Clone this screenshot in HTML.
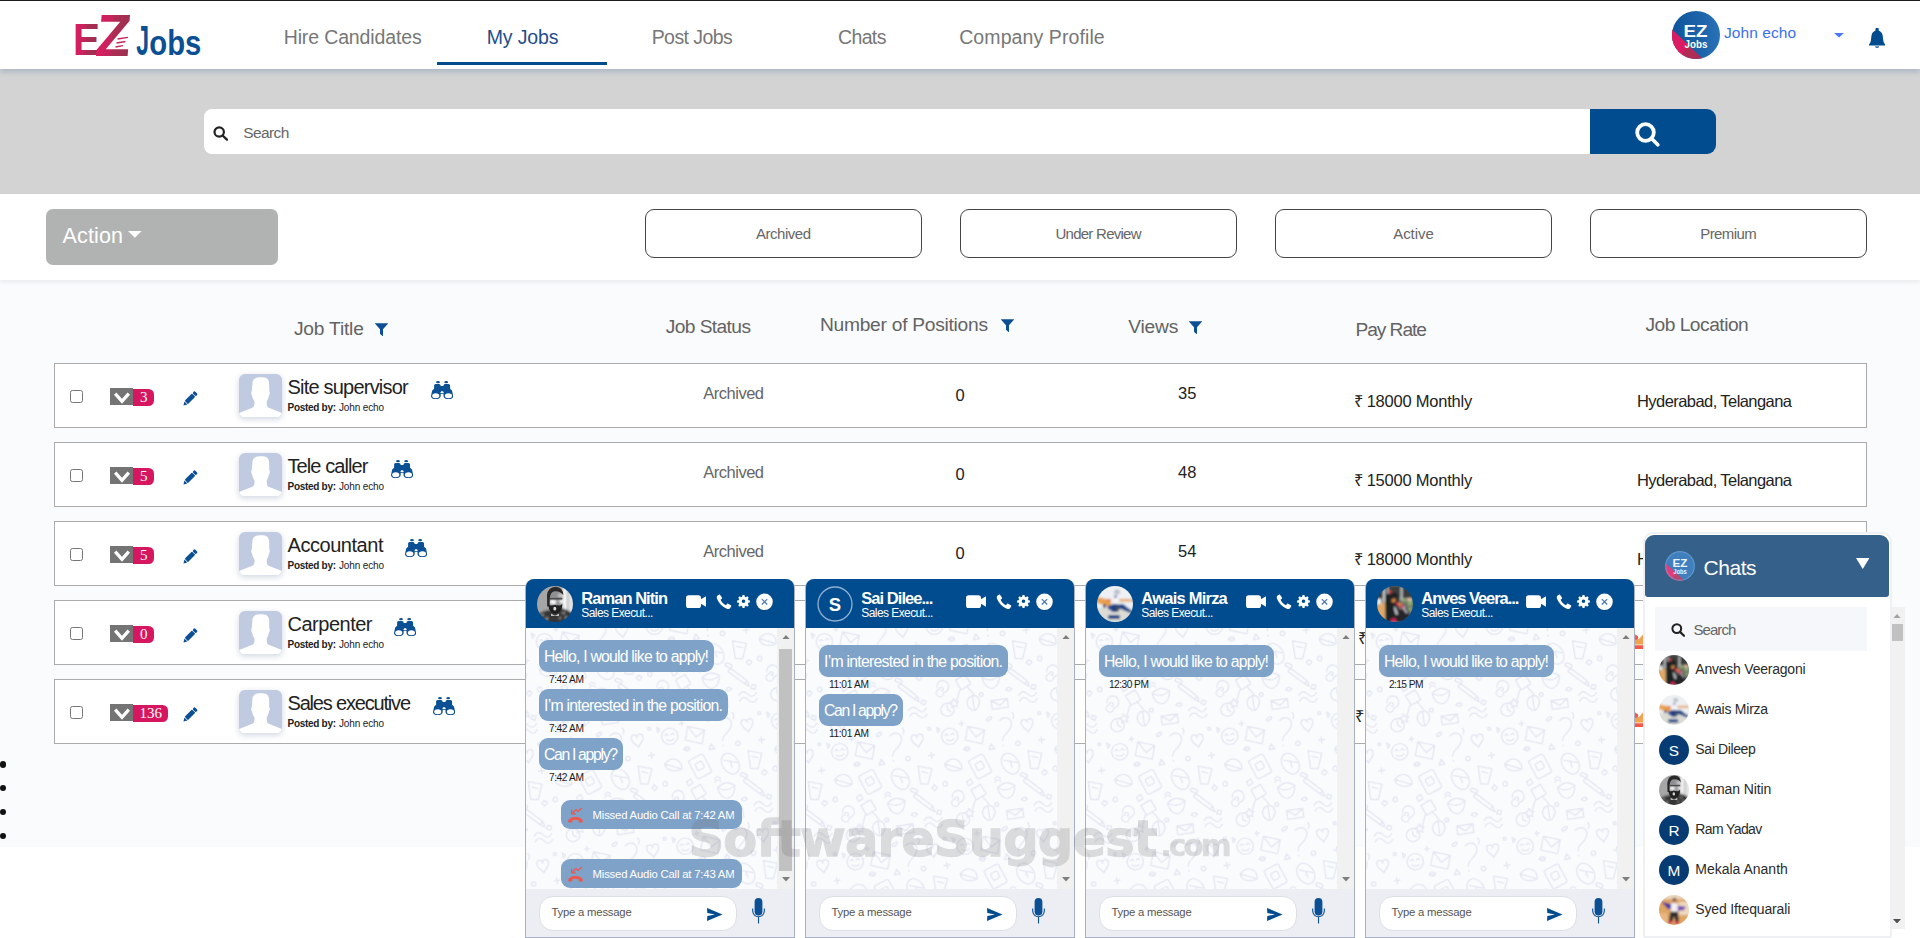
<!DOCTYPE html>
<html lang="en">
<head>
<meta charset="utf-8">
<title>EZ Jobs - My Jobs</title>
<style>
*{box-sizing:border-box;margin:0;padding:0}
html,body{width:1920px;height:938px;overflow:hidden;background:#fff;font-family:"Liberation Sans",sans-serif;color:#333}
.abs{position:absolute}
.t{position:absolute;white-space:pre}
#page{position:relative;width:1920px;height:938px;overflow:hidden;background:#fff}
</style>
</head>
<body>
<div id="page">
<div class="abs" style="left:0px;top:280px;width:1920px;height:566.5px;background:#fafbfd"></div><div class="abs" style="left:0px;top:69px;width:1920px;height:125px;background:#d3d3d3"></div><div class="abs" style="left:0px;top:194px;width:1920px;height:86px;background:#fff;box-shadow:0 2px 4px rgba(40,45,60,.085)"></div><div class="abs" style="left:0px;top:0px;width:1920px;height:68.5px;background:#fff;box-shadow:0 3px 5px rgba(110,140,175,.38)"></div><div class="abs" style="left:0px;top:0px;width:1920px;height:1px;background:#1a1a1a"></div><svg class="abs" style="left:70px;top:10px;" width="140" height="52" viewBox="0 0 140 52"><defs><linearGradient id="lg1" x1="0" x2="1" y1="0" y2="0"><stop offset="0" stop-color="#dc1c62"/><stop offset=".45" stop-color="#c4245c"/><stop offset=".46" stop-color="#b02c55"/><stop offset="1" stop-color="#98304e"/></linearGradient></defs>
<text x="3" y="45.300" font-family="Liberation Sans, sans-serif" font-weight="700" font-size="43.500" fill="url(#lg1)" textLength="27" lengthAdjust="spacingAndGlyphs">E</text>
<text transform="translate(24.300,45.700) skewX(-5)" font-family="Liberation Sans, sans-serif" font-weight="700" font-size="59.500" fill="url(#lg1)" textLength="35" lengthAdjust="spacingAndGlyphs">Z</text>
<path d="M47.500 29l10.500-1.700M46.500 33l9-1.500M45.500 37l7.500-1.300" stroke="#c4245c" stroke-width="1.3"/>
<text y="45" font-family="Liberation Sans, sans-serif" font-weight="700" fill="#0b4f94"><tspan x="66.300" font-size="42" textLength="12.800" lengthAdjust="spacingAndGlyphs">J</tspan><tspan x="79.300" font-size="35.500" textLength="52" lengthAdjust="spacingAndGlyphs">obs</tspan></text></svg><span class="t" style="left:283.70px;top:27.69px;font-size:19.5px;line-height:19.5px;color:#777;letter-spacing:-0.131px;">Hire Candidates</span><span class="t" style="left:486.70px;top:27.69px;font-size:19.5px;line-height:19.5px;color:#1f4e8c;letter-spacing:-0.152px;">My Jobs</span><span class="t" style="left:651.70px;top:27.69px;font-size:19.5px;line-height:19.5px;color:#777;letter-spacing:-0.580px;">Post Jobs</span><span class="t" style="left:838.00px;top:27.69px;font-size:19.5px;line-height:19.5px;color:#777;letter-spacing:-0.638px;">Chats</span><span class="t" style="left:959.20px;top:27.69px;font-size:19.5px;line-height:19.5px;color:#777;letter-spacing:0.096px;">Company Profile</span><div class="abs" style="left:437px;top:62px;width:170px;height:3px;background:#004c8f"></div><svg class="abs" style="left:1672px;top:11px;" width="48" height="48" viewBox="0 0 48 48"><defs><clipPath id="c1"><circle cx="24" cy="24" r="24"/></clipPath><linearGradient id="ag" x1="0" x2="1"><stop offset="0" stop-color="#0f559c"/><stop offset=".6" stop-color="#1c63aa"/><stop offset="1" stop-color="#2a72b8"/></linearGradient></defs>
<g clip-path="url(#c1)"><rect width="48" height="48" fill="url(#ag)"/><path d="M-2 16.500L33 50L-2 50z" fill="#b02c55"/><path d="M-2 16.500L15.500 33.300L8 50L-2 50z" fill="#dc1c62"/></g>
<text x="11.5" y="25.5" font-family="Liberation Sans, sans-serif" font-weight="700" font-size="17" fill="#fff" textLength="24" lengthAdjust="spacingAndGlyphs">EZ</text>
<text x="12.5" y="37" font-family="Liberation Sans, sans-serif" font-weight="700" font-size="11" fill="#fff" textLength="23" lengthAdjust="spacingAndGlyphs">Jobs</text></svg><span class="t" style="left:1724.00px;top:25.08px;font-size:15.5px;line-height:15.5px;color:#3b6ff0;letter-spacing:0.059px;">John echo</span><svg class="abs" style="left:1834px;top:33px;" width="10" height="5" viewBox="0 0 10 5"><path d="M0 0h10l-5 4.6z" fill="#4a7af5"/></svg><svg class="abs" style="left:1868.8px;top:27.8px;" width="16.2" height="20.2" viewBox="0 0 16.200 20.200"><path d="M6.500 .400Q6.500 0 7 0H9.200Q9.700 0 9.700 .400V2.600C11.500 3.200 13.200 4.800 13.700 7.500L14.400 13C14.600 14.500 15.500 15.500 16.200 16.400V17.400H0V16.400C.700 15.500 1.600 14.500 1.800 13L2.500 7.500C3 4.800 4.700 3.200 6.500 2.600Z" fill="#004c8f"/><path d="M6.100 18.300H10.100C10.100 19.500 9.200 20.200 8.100 20.200C7 20.200 6.100 19.500 6.100 18.300Z" fill="#004c8f" opacity=".75"/></svg><div class="abs" style="left:204px;top:109px;width:1386px;height:45px;background:#fff;border-radius:8px 0 0 8px"></div><div class="abs" style="left:1590px;top:109px;width:126px;height:45px;background:#004c8f;border-radius:0 9px 9px 0"></div><svg class="abs" style="left:212.5px;top:125.5px;" width="15.5" height="15" viewBox="0 0 15.5 15"><circle cx="6.2" cy="6" r="4.700" fill="none" stroke="#222" stroke-width="2.200"/><path d="M9.600 9.500l4.300 4.100" stroke="#222" stroke-width="2.400" stroke-linecap="round"/></svg><span class="t" style="left:243.30px;top:124.88px;font-size:15.5px;line-height:15.5px;color:#666;letter-spacing:-0.625px;">Search</span><svg class="abs" style="left:1634.5px;top:121.5px;" width="25" height="25" viewBox="0 0 25 25"><circle cx="10.500" cy="10.500" r="8.300" fill="none" stroke="#fff" stroke-width="3.800"/><path d="M16.800 16.800l6 6" stroke="#fff" stroke-width="3.600" stroke-linecap="round"/></svg><div class="abs" style="left:46px;top:209px;width:232px;height:56px;background:#b1b3b2;border-radius:7px"></div><span class="t" style="left:62.50px;top:225.60px;font-size:21.5px;line-height:21.5px;color:#fff;letter-spacing:0.147px;">Action</span><svg class="abs" style="left:128.3px;top:230.8px;" width="13.7" height="7" viewBox="0 0 13.7 7"><path d="M0 0h13.700l-6.850 6.800z" fill="#fff"/></svg><div class="abs" style="left:645px;top:209px;width:277px;height:49px;background:#fff;border:1px solid #444;border-radius:9px"></div><span class="t" style="left:756.00px;top:226.30px;font-size:15px;line-height:15px;color:#666;letter-spacing:-0.480px;">Archived</span><div class="abs" style="left:960px;top:209px;width:277px;height:49px;background:#fff;border:1px solid #444;border-radius:9px"></div><span class="t" style="left:1055.50px;top:226.30px;font-size:15px;line-height:15px;color:#666;letter-spacing:-0.747px;">Under Review</span><div class="abs" style="left:1275px;top:209px;width:277px;height:49px;background:#fff;border:1px solid #444;border-radius:9px"></div><span class="t" style="left:1393.25px;top:226.30px;font-size:15px;line-height:15px;color:#666;letter-spacing:-0.072px;">Active</span><div class="abs" style="left:1590px;top:209px;width:277px;height:49px;background:#fff;border:1px solid #444;border-radius:9px"></div><span class="t" style="left:1700.25px;top:226.30px;font-size:15px;line-height:15px;color:#666;letter-spacing:-0.586px;">Premium</span><span class="t" style="left:293.90px;top:319.05px;font-size:19.2px;line-height:19.2px;color:#636363;letter-spacing:-0.184px;">Job Title</span><svg class="abs" style="left:375px;top:323px;" width="13" height="13.7" viewBox="0 0 13 13"><path d="M0.300 0h12.400c.3 0 .4.300.2.500L8 6v6.400c0 .3-.3.400-.5.200L5.200 10.600c-.1-.1-.2-.2-.2-.4V6L.1.500C-.1.300 0 0 .3 0z" fill="#0b4f94"/></svg><span class="t" style="left:665.80px;top:316.75px;font-size:19.2px;line-height:19.2px;color:#636363;letter-spacing:-0.608px;">Job Status</span><span class="t" style="left:820.00px;top:315.25px;font-size:19.2px;line-height:19.2px;color:#636363;letter-spacing:-0.265px;">Number of Positions</span><svg class="abs" style="left:1000.5px;top:318.8px;" width="13" height="13.7" viewBox="0 0 13 13"><path d="M0.300 0h12.400c.3 0 .4.300.2.500L8 6v6.400c0 .3-.3.400-.5.200L5.200 10.600c-.1-.1-.2-.2-.2-.4V6L.1.500C-.1.300 0 0 .3 0z" fill="#0b4f94"/></svg><span class="t" style="left:1128.30px;top:316.75px;font-size:19.2px;line-height:19.2px;color:#636363;letter-spacing:-0.211px;">Views</span><svg class="abs" style="left:1189px;top:320.5px;" width="13" height="13.7" viewBox="0 0 13 13"><path d="M0.300 0h12.400c.3 0 .4.300.2.500L8 6v6.400c0 .3-.3.400-.5.200L5.200 10.600c-.1-.1-.2-.2-.2-.4V6L.1.500C-.1.300 0 0 .3 0z" fill="#0b4f94"/></svg><span class="t" style="left:1355.40px;top:319.95px;font-size:19.2px;line-height:19.2px;color:#636363;letter-spacing:-1.048px;">Pay Rate</span><span class="t" style="left:1645.40px;top:315.25px;font-size:19.2px;line-height:19.2px;color:#636363;letter-spacing:-0.492px;">Job Location</span><div class="abs" style="left:54px;top:363px;width:1813px;height:65px;background:#fff;border:1px solid #ababab"></div><div class="abs" style="left:70px;top:390px;width:13px;height:13px;background:#fff;border:1px solid #767676;border-radius:2.500px"></div><div class="abs" style="left:110px;top:388px;width:23px;height:17px;background:#747474"></div><svg class="abs" style="left:113px;top:391px;" width="18" height="14" viewBox="0 0 18 14"><path d="M2.200 2.600L9 10.300L15.800 2.600" fill="none" stroke="#fff" stroke-width="3.300"/></svg><div class="abs" style="left:133px;top:389px;width:21px;height:17px;background:#d6175f;border-radius:0 5.500px 5.500px 0"></div><span class="t" style="left:140.05px;top:390.44px;font-size:15px;line-height:15px;color:#fff;font-family:'Liberation Serif',serif;">3</span><svg class="abs" style="left:182.5px;top:390.5px;" width="16" height="16" viewBox="0 0 16 16"><g transform="translate(0.500,14.400) rotate(-45.500)" fill="#0b4f94"><path d="M0 0L3.400-2.100V2.100Z"/><rect x="4.100" y="-2.350" width="10.300" height="4.700" rx=".7"/><rect x="15" y="-2.350" width="3" height="4.700" rx="1.300"/></g></svg><svg class="abs" style="left:239px;top:373.8px;filter:drop-shadow(0 2px 3px rgba(120,135,170,.35))" width="43" height="43.5" viewBox="0 0 43 43.5"><rect width="43" height="43.500" rx="6" fill="#c0cbe1"/><path clip-path="url(#pc)" d="M23.600 3.200C28 3.200 30.100 6 30.100 9.500L30.300 17.500C31 18 31 20 30 21.500C29.500 24 28.500 26 27.800 27.600C27.500 30 28 32.500 29 33.600L43.500 39.300V44H-.5V39.300L14 33.600C15 32.500 15.800 30 15.500 27.600C14.500 26 13.500 24 13 21.500C12 20 12 18 12.700 17.500L13.400 9.500C13.400 6 16 3.200 20 3.200Z" fill="#fff"/></svg><span class="t" style="left:287.50px;top:377.27px;font-size:20px;line-height:20px;color:#222;letter-spacing:-0.792px;">Site supervisor</span><span class="t" style="left:287.50px;top:403.44px;font-size:10px;line-height:10px;color:#222;font-weight:700;letter-spacing:-0.292px;">Posted by:</span><span class="t" style="left:339.00px;top:403.44px;font-size:10px;line-height:10px;color:#222;letter-spacing:-0.145px;">John echo</span><svg class="abs" style="left:430.9px;top:380.8px;" width="22.2" height="18.3" viewBox="0 0 22.200 18.300"><g fill="#0b4f94"><ellipse cx="7" cy="1.200" rx="1.900" ry="1.150"/><ellipse cx="15.200" cy="1.200" rx="1.900" ry="1.150"/><path d="M3.100 4.500Q3.100 2.900 4.700 2.900H8Q9.600 2.900 9.600 4.500V5.100H12.500V4.500Q12.500 2.900 14.100 2.900H17.400Q19.100 2.900 19.100 4.500V7.800L21 9.600L22.200 15C22.200 17 20 18.300 17.400 18.300C14.500 18.300 12.600 16.800 12.500 15V12.700H9.700V15C9.600 16.800 7.500 18.300 4.700 18.300C2 18.300 0 17 0 15L1.200 9.600L3.100 7.800Z"/></g><ellipse cx="4.750" cy="14.800" rx="3.600" ry="2.500" fill="#fff"/><ellipse cx="17.450" cy="14.800" rx="3.600" ry="2.500" fill="#fff"/><path d="M9.300 12L10.200 10.200H12L12.900 12Z" fill="#fff"/></svg><span class="t" style="left:703.30px;top:385.33px;font-size:16.5px;line-height:16.5px;color:#666;letter-spacing:-0.500px;">Archived</span><span class="t" style="left:955.60px;top:387.03px;font-size:16.5px;line-height:16.5px;color:#222;">0</span><span class="t" style="left:1178.00px;top:385.33px;font-size:16.5px;line-height:16.5px;color:#222;">35</span><span class="t" style="left:1353.50px;top:392.63px;font-size:16.5px;line-height:16.5px;color:#222;letter-spacing:-0.223px;">₹ 18000 Monthly</span><span class="t" style="left:1637.00px;top:392.63px;font-size:16.5px;line-height:16.5px;color:#222;letter-spacing:-0.566px;">Hyderabad, Telangana</span><div class="abs" style="left:54px;top:442px;width:1813px;height:65px;background:#fff;border:1px solid #ababab"></div><div class="abs" style="left:70px;top:469px;width:13px;height:13px;background:#fff;border:1px solid #767676;border-radius:2.500px"></div><div class="abs" style="left:110px;top:467px;width:23px;height:17px;background:#747474"></div><svg class="abs" style="left:113px;top:470px;" width="18" height="14" viewBox="0 0 18 14"><path d="M2.200 2.600L9 10.300L15.800 2.600" fill="none" stroke="#fff" stroke-width="3.300"/></svg><div class="abs" style="left:133px;top:468px;width:21px;height:17px;background:#d6175f;border-radius:0 5.500px 5.500px 0"></div><span class="t" style="left:140.05px;top:469.44px;font-size:15px;line-height:15px;color:#fff;font-family:'Liberation Serif',serif;">5</span><svg class="abs" style="left:182.5px;top:469.5px;" width="16" height="16" viewBox="0 0 16 16"><g transform="translate(0.500,14.400) rotate(-45.500)" fill="#0b4f94"><path d="M0 0L3.400-2.100V2.100Z"/><rect x="4.100" y="-2.350" width="10.300" height="4.700" rx=".7"/><rect x="15" y="-2.350" width="3" height="4.700" rx="1.300"/></g></svg><svg class="abs" style="left:239px;top:452.8px;filter:drop-shadow(0 2px 3px rgba(120,135,170,.35))" width="43" height="43.5" viewBox="0 0 43 43.5"><rect width="43" height="43.500" rx="6" fill="#c0cbe1"/><path clip-path="url(#pc)" d="M23.600 3.200C28 3.200 30.100 6 30.100 9.500L30.300 17.500C31 18 31 20 30 21.500C29.500 24 28.500 26 27.800 27.600C27.500 30 28 32.500 29 33.600L43.500 39.300V44H-.5V39.300L14 33.600C15 32.500 15.800 30 15.500 27.600C14.500 26 13.500 24 13 21.500C12 20 12 18 12.700 17.500L13.400 9.500C13.400 6 16 3.200 20 3.200Z" fill="#fff"/></svg><span class="t" style="left:287.50px;top:456.27px;font-size:20px;line-height:20px;color:#222;letter-spacing:-0.905px;">Tele caller</span><span class="t" style="left:287.50px;top:482.44px;font-size:10px;line-height:10px;color:#222;font-weight:700;letter-spacing:-0.292px;">Posted by:</span><span class="t" style="left:339.00px;top:482.44px;font-size:10px;line-height:10px;color:#222;letter-spacing:-0.145px;">John echo</span><svg class="abs" style="left:390.9px;top:459.8px;" width="22.2" height="18.3" viewBox="0 0 22.200 18.300"><g fill="#0b4f94"><ellipse cx="7" cy="1.200" rx="1.900" ry="1.150"/><ellipse cx="15.200" cy="1.200" rx="1.900" ry="1.150"/><path d="M3.100 4.500Q3.100 2.900 4.700 2.900H8Q9.600 2.900 9.600 4.500V5.100H12.500V4.500Q12.500 2.900 14.100 2.900H17.400Q19.100 2.900 19.100 4.500V7.800L21 9.600L22.200 15C22.200 17 20 18.300 17.400 18.300C14.500 18.300 12.600 16.800 12.500 15V12.700H9.700V15C9.600 16.800 7.500 18.300 4.700 18.300C2 18.300 0 17 0 15L1.200 9.600L3.100 7.800Z"/></g><ellipse cx="4.750" cy="14.800" rx="3.600" ry="2.500" fill="#fff"/><ellipse cx="17.450" cy="14.800" rx="3.600" ry="2.500" fill="#fff"/><path d="M9.300 12L10.200 10.200H12L12.900 12Z" fill="#fff"/></svg><span class="t" style="left:703.30px;top:464.33px;font-size:16.5px;line-height:16.5px;color:#666;letter-spacing:-0.500px;">Archived</span><span class="t" style="left:955.60px;top:466.03px;font-size:16.5px;line-height:16.5px;color:#222;">0</span><span class="t" style="left:1178.00px;top:464.33px;font-size:16.5px;line-height:16.5px;color:#222;">48</span><span class="t" style="left:1353.50px;top:471.63px;font-size:16.5px;line-height:16.5px;color:#222;letter-spacing:-0.223px;">₹ 15000 Monthly</span><span class="t" style="left:1637.00px;top:471.63px;font-size:16.5px;line-height:16.5px;color:#222;letter-spacing:-0.566px;">Hyderabad, Telangana</span><div class="abs" style="left:54px;top:521px;width:1813px;height:65px;background:#fff;border:1px solid #ababab"></div><div class="abs" style="left:70px;top:548px;width:13px;height:13px;background:#fff;border:1px solid #767676;border-radius:2.500px"></div><div class="abs" style="left:110px;top:546px;width:23px;height:17px;background:#747474"></div><svg class="abs" style="left:113px;top:549px;" width="18" height="14" viewBox="0 0 18 14"><path d="M2.200 2.600L9 10.300L15.800 2.600" fill="none" stroke="#fff" stroke-width="3.300"/></svg><div class="abs" style="left:133px;top:547px;width:21px;height:17px;background:#d6175f;border-radius:0 5.500px 5.500px 0"></div><span class="t" style="left:140.05px;top:548.44px;font-size:15px;line-height:15px;color:#fff;font-family:'Liberation Serif',serif;">5</span><svg class="abs" style="left:182.5px;top:548.5px;" width="16" height="16" viewBox="0 0 16 16"><g transform="translate(0.500,14.400) rotate(-45.500)" fill="#0b4f94"><path d="M0 0L3.400-2.100V2.100Z"/><rect x="4.100" y="-2.350" width="10.300" height="4.700" rx=".7"/><rect x="15" y="-2.350" width="3" height="4.700" rx="1.300"/></g></svg><svg class="abs" style="left:239px;top:531.8px;filter:drop-shadow(0 2px 3px rgba(120,135,170,.35))" width="43" height="43.5" viewBox="0 0 43 43.5"><rect width="43" height="43.500" rx="6" fill="#c0cbe1"/><path clip-path="url(#pc)" d="M23.600 3.200C28 3.200 30.100 6 30.100 9.500L30.300 17.500C31 18 31 20 30 21.500C29.500 24 28.500 26 27.800 27.600C27.500 30 28 32.500 29 33.600L43.500 39.300V44H-.5V39.300L14 33.600C15 32.500 15.800 30 15.500 27.600C14.500 26 13.500 24 13 21.500C12 20 12 18 12.700 17.500L13.400 9.500C13.400 6 16 3.200 20 3.200Z" fill="#fff"/></svg><span class="t" style="left:287.50px;top:535.27px;font-size:20px;line-height:20px;color:#222;letter-spacing:-0.453px;">Accountant</span><span class="t" style="left:287.50px;top:561.43px;font-size:10px;line-height:10px;color:#222;font-weight:700;letter-spacing:-0.292px;">Posted by:</span><span class="t" style="left:339.00px;top:561.43px;font-size:10px;line-height:10px;color:#222;letter-spacing:-0.145px;">John echo</span><svg class="abs" style="left:404.9px;top:538.8px;" width="22.2" height="18.3" viewBox="0 0 22.200 18.300"><g fill="#0b4f94"><ellipse cx="7" cy="1.200" rx="1.900" ry="1.150"/><ellipse cx="15.200" cy="1.200" rx="1.900" ry="1.150"/><path d="M3.100 4.500Q3.100 2.900 4.700 2.900H8Q9.600 2.900 9.600 4.500V5.100H12.500V4.500Q12.500 2.900 14.100 2.900H17.400Q19.100 2.900 19.100 4.500V7.800L21 9.600L22.200 15C22.200 17 20 18.300 17.400 18.300C14.500 18.300 12.600 16.800 12.500 15V12.700H9.700V15C9.600 16.800 7.500 18.300 4.700 18.300C2 18.300 0 17 0 15L1.200 9.600L3.100 7.800Z"/></g><ellipse cx="4.750" cy="14.800" rx="3.600" ry="2.500" fill="#fff"/><ellipse cx="17.450" cy="14.800" rx="3.600" ry="2.500" fill="#fff"/><path d="M9.300 12L10.200 10.200H12L12.900 12Z" fill="#fff"/></svg><span class="t" style="left:703.30px;top:543.33px;font-size:16.5px;line-height:16.5px;color:#666;letter-spacing:-0.500px;">Archived</span><span class="t" style="left:955.60px;top:545.03px;font-size:16.5px;line-height:16.5px;color:#222;">0</span><span class="t" style="left:1178.00px;top:543.33px;font-size:16.5px;line-height:16.5px;color:#222;">54</span><span class="t" style="left:1353.50px;top:550.63px;font-size:16.5px;line-height:16.5px;color:#222;letter-spacing:-0.223px;">₹ 18000 Monthly</span><span class="t" style="left:1637.00px;top:550.63px;font-size:16.5px;line-height:16.5px;color:#222;letter-spacing:-0.566px;">Hyderabad, Telangana</span><div class="abs" style="left:54px;top:600px;width:1813px;height:65px;background:#fff;border:1px solid #ababab"></div><div class="abs" style="left:70px;top:627px;width:13px;height:13px;background:#fff;border:1px solid #767676;border-radius:2.500px"></div><div class="abs" style="left:110px;top:625px;width:23px;height:17px;background:#747474"></div><svg class="abs" style="left:113px;top:628px;" width="18" height="14" viewBox="0 0 18 14"><path d="M2.200 2.600L9 10.300L15.800 2.600" fill="none" stroke="#fff" stroke-width="3.300"/></svg><div class="abs" style="left:133px;top:626px;width:21px;height:17px;background:#d6175f;border-radius:0 5.500px 5.500px 0"></div><span class="t" style="left:140.05px;top:627.44px;font-size:15px;line-height:15px;color:#fff;font-family:'Liberation Serif',serif;">0</span><svg class="abs" style="left:182.5px;top:627.5px;" width="16" height="16" viewBox="0 0 16 16"><g transform="translate(0.500,14.400) rotate(-45.500)" fill="#0b4f94"><path d="M0 0L3.400-2.100V2.100Z"/><rect x="4.100" y="-2.350" width="10.300" height="4.700" rx=".7"/><rect x="15" y="-2.350" width="3" height="4.700" rx="1.300"/></g></svg><svg class="abs" style="left:239px;top:610.8px;filter:drop-shadow(0 2px 3px rgba(120,135,170,.35))" width="43" height="43.5" viewBox="0 0 43 43.5"><rect width="43" height="43.500" rx="6" fill="#c0cbe1"/><path clip-path="url(#pc)" d="M23.600 3.200C28 3.200 30.100 6 30.100 9.500L30.300 17.500C31 18 31 20 30 21.500C29.500 24 28.500 26 27.800 27.600C27.500 30 28 32.500 29 33.600L43.500 39.300V44H-.5V39.300L14 33.600C15 32.500 15.800 30 15.500 27.600C14.500 26 13.500 24 13 21.500C12 20 12 18 12.700 17.500L13.400 9.500C13.400 6 16 3.200 20 3.200Z" fill="#fff"/></svg><span class="t" style="left:287.50px;top:614.27px;font-size:20px;line-height:20px;color:#222;letter-spacing:-0.492px;">Carpenter</span><span class="t" style="left:287.50px;top:640.43px;font-size:10px;line-height:10px;color:#222;font-weight:700;letter-spacing:-0.292px;">Posted by:</span><span class="t" style="left:339.00px;top:640.43px;font-size:10px;line-height:10px;color:#222;letter-spacing:-0.145px;">John echo</span><svg class="abs" style="left:393.9px;top:617.8px;" width="22.2" height="18.3" viewBox="0 0 22.200 18.300"><g fill="#0b4f94"><ellipse cx="7" cy="1.200" rx="1.900" ry="1.150"/><ellipse cx="15.200" cy="1.200" rx="1.900" ry="1.150"/><path d="M3.100 4.500Q3.100 2.900 4.700 2.900H8Q9.600 2.900 9.600 4.500V5.100H12.500V4.500Q12.500 2.900 14.100 2.900H17.400Q19.100 2.900 19.100 4.500V7.800L21 9.600L22.200 15C22.200 17 20 18.300 17.400 18.300C14.500 18.300 12.600 16.800 12.500 15V12.700H9.700V15C9.600 16.800 7.500 18.300 4.700 18.300C2 18.300 0 17 0 15L1.200 9.600L3.100 7.800Z"/></g><ellipse cx="4.750" cy="14.800" rx="3.600" ry="2.500" fill="#fff"/><ellipse cx="17.450" cy="14.800" rx="3.600" ry="2.500" fill="#fff"/><path d="M9.300 12L10.200 10.200H12L12.900 12Z" fill="#fff"/></svg><span class="t" style="left:703.30px;top:622.33px;font-size:16.5px;line-height:16.5px;color:#666;letter-spacing:-0.500px;">Archived</span><span class="t" style="left:955.60px;top:624.03px;font-size:16.5px;line-height:16.5px;color:#222;">0</span><span class="t" style="left:1178.00px;top:622.33px;font-size:16.5px;line-height:16.5px;color:#222;">12</span><span class="t" style="left:1358.00px;top:629.63px;font-size:16.5px;line-height:16.5px;color:#222;letter-spacing:-0.223px;">₹ 16000 Monthly</span><span class="t" style="left:1662.00px;top:629.63px;font-size:16.5px;line-height:16.5px;color:#222;letter-spacing:-0.566px;">Hyderabad, Telangana</span><div class="abs" style="left:54px;top:679px;width:1813px;height:65px;background:#fff;border:1px solid #ababab"></div><div class="abs" style="left:70px;top:706px;width:13px;height:13px;background:#fff;border:1px solid #767676;border-radius:2.500px"></div><div class="abs" style="left:110px;top:704px;width:23px;height:17px;background:#747474"></div><svg class="abs" style="left:113px;top:707px;" width="18" height="14" viewBox="0 0 18 14"><path d="M2.200 2.600L9 10.300L15.800 2.600" fill="none" stroke="#fff" stroke-width="3.300"/></svg><div class="abs" style="left:133px;top:705px;width:35px;height:17px;background:#d6175f;border-radius:0 5.500px 5.500px 0"></div><span class="t" style="left:139.55px;top:706.44px;font-size:15px;line-height:15px;color:#fff;font-family:'Liberation Serif',serif;">136</span><svg class="abs" style="left:182.5px;top:706.5px;" width="16" height="16" viewBox="0 0 16 16"><g transform="translate(0.500,14.400) rotate(-45.500)" fill="#0b4f94"><path d="M0 0L3.400-2.100V2.100Z"/><rect x="4.100" y="-2.350" width="10.300" height="4.700" rx=".7"/><rect x="15" y="-2.350" width="3" height="4.700" rx="1.300"/></g></svg><svg class="abs" style="left:239px;top:689.8px;filter:drop-shadow(0 2px 3px rgba(120,135,170,.35))" width="43" height="43.5" viewBox="0 0 43 43.5"><rect width="43" height="43.500" rx="6" fill="#c0cbe1"/><path clip-path="url(#pc)" d="M23.600 3.200C28 3.200 30.100 6 30.100 9.500L30.300 17.500C31 18 31 20 30 21.500C29.500 24 28.500 26 27.800 27.600C27.500 30 28 32.500 29 33.600L43.500 39.300V44H-.5V39.300L14 33.600C15 32.500 15.800 30 15.500 27.600C14.500 26 13.500 24 13 21.500C12 20 12 18 12.700 17.500L13.400 9.500C13.400 6 16 3.200 20 3.200Z" fill="#fff"/></svg><span class="t" style="left:287.50px;top:693.27px;font-size:20px;line-height:20px;color:#222;letter-spacing:-1.184px;">Sales executive</span><span class="t" style="left:287.50px;top:719.43px;font-size:10px;line-height:10px;color:#222;font-weight:700;letter-spacing:-0.292px;">Posted by:</span><span class="t" style="left:339.00px;top:719.43px;font-size:10px;line-height:10px;color:#222;letter-spacing:-0.145px;">John echo</span><svg class="abs" style="left:432.9px;top:696.8px;" width="22.2" height="18.3" viewBox="0 0 22.200 18.300"><g fill="#0b4f94"><ellipse cx="7" cy="1.200" rx="1.900" ry="1.150"/><ellipse cx="15.200" cy="1.200" rx="1.900" ry="1.150"/><path d="M3.100 4.500Q3.100 2.900 4.700 2.900H8Q9.600 2.900 9.600 4.500V5.100H12.500V4.500Q12.500 2.900 14.100 2.900H17.400Q19.100 2.900 19.100 4.500V7.800L21 9.600L22.200 15C22.200 17 20 18.300 17.400 18.300C14.500 18.300 12.600 16.800 12.500 15V12.700H9.700V15C9.600 16.800 7.500 18.300 4.700 18.300C2 18.300 0 17 0 15L1.200 9.600L3.100 7.800Z"/></g><ellipse cx="4.750" cy="14.800" rx="3.600" ry="2.500" fill="#fff"/><ellipse cx="17.450" cy="14.800" rx="3.600" ry="2.500" fill="#fff"/><path d="M9.300 12L10.200 10.200H12L12.900 12Z" fill="#fff"/></svg><span class="t" style="left:703.30px;top:701.33px;font-size:16.5px;line-height:16.5px;color:#666;letter-spacing:-0.500px;">Archived</span><span class="t" style="left:955.60px;top:703.03px;font-size:16.5px;line-height:16.5px;color:#222;">0</span><span class="t" style="left:1178.00px;top:701.33px;font-size:16.5px;line-height:16.5px;color:#222;">210</span><span class="t" style="left:1354.50px;top:708.03px;font-size:16.5px;line-height:16.5px;color:#222;letter-spacing:-0.223px;">₹ 20000 Monthly</span><span class="t" style="left:1662.00px;top:708.63px;font-size:16.5px;line-height:16.5px;color:#222;letter-spacing:-0.566px;">Hyderabad, Telangana</span><div class="abs" style="left:-0.2px;top:761.0px;width:6.6px;height:6.6px;background:#111;border-radius:50%"></div><div class="abs" style="left:-0.2px;top:784.9px;width:6.6px;height:6.6px;background:#111;border-radius:50%"></div><div class="abs" style="left:-0.2px;top:808.8px;width:6.6px;height:6.6px;background:#111;border-radius:50%"></div><div class="abs" style="left:-0.2px;top:832.7px;width:6.6px;height:6.6px;background:#111;border-radius:50%"></div><svg class="abs" style="left:1635px;top:631.8px;" width="8" height="17" viewBox="0 0 8 17"><path d="M0 1.500l3.500 6l4.500-5v11H0z" fill="#f0a352"/><circle cx="1" cy="5.500" r="2.200" fill="#f4574b"/><rect y="12" width="8" height="1" fill="#f6c89a"/><rect y="13.400" width="8" height="3.600" fill="#f4574b"/></svg><svg class="abs" style="left:1635px;top:709.8px;" width="8" height="17" viewBox="0 0 8 17"><path d="M0 1.500l3.500 6l4.500-5v11H0z" fill="#f0a352"/><circle cx="1" cy="5.500" r="2.200" fill="#f4574b"/><rect y="12" width="8" height="1" fill="#f6c89a"/><rect y="13.400" width="8" height="3.600" fill="#f4574b"/></svg><svg class="abs" width="0" height="0" style="left:0;top:0"><defs><clipPath id="pc"><rect width="43" height="43.500" rx="6"/></clipPath><filter id="avb" x="-20%" y="-20%" width="140%" height="140%"><feGaussianBlur stdDeviation="1"/></filter>
<pattern id="dood" width="150" height="150" patternUnits="userSpaceOnUse" patternTransform="scale(.74) rotate(-8)">
<rect width="150" height="150" fill="#fafbfd"/>
<g fill="none" stroke="#e6e9f3" stroke-width="1.900" stroke-linecap="round" stroke-linejoin="round">
<circle cx="22" cy="22" r="11"/><path d="M16 20q2-3 4 0M24 20q2-3 4 0M17 26q5 4 10 0"/>
<path d="M48 12l22 8l-6 18l-22-8zM48 12l9 16l13-8"/>
<path d="M92 10c8-6 18 0 14 10c-3 8-14 10-14 18M92 44v1"/>
<path d="M120 18c0-6 8-6 8 0c0-6 8-6 8 0c0 7-8 10-8 13c0-3-8-6-8-13z"/>
<path d="M10 58c10-10 24-4 22 10c-12 4-22-2-22-10zM10 58l22 10"/>
<rect x="46" y="54" width="22" height="28" rx="3" transform="rotate(-20 57 68)"/><rect x="52" y="62" width="10" height="10" rx="2" transform="rotate(-20 57 68)"/>
<ellipse cx="98" cy="70" rx="11" ry="15" transform="rotate(-25 98 70)"/><path d="M90 64l18 6M98 67l2 8"/>
<path d="M124 56l18 6l-8 20l-10-2zM128 64l8 3"/>
<path d="M14 104a8 8 0 1 1 8 8a5 5 0 1 1-5-5a2.500 2.500 0 1 1 2.500 2.500"/>
<path d="M40 98l14-6l6 14l-14 6zM44 112l-6 14M54 108l8 12"/>
<path d="M76 100q12-10 24 0q-2 14-12 16q-10-2-12-16zM76 100q12 8 24 0"/>
<path d="M112 96l20 20M116 92l20 20M112 96l4-4M132 116l4-4l2 8z"/>
<circle cx="24" cy="136" r="9"/><path d="M24 130v6l4 3"/>
<path d="M52 128c4-8 14-8 16 0c2 8-6 14-8 14c-4 0-10-6-8-14zM60 122v20"/>
<path d="M84 132h22v12H84zM84 132l11 8l11-8"/>
<path d="M122 130q6-8 12 0t12 0M122 138q6-8 12 0t12 0"/>
<path d="M38 42q5-6 9 0q-4 6-9 0zM38 42h9"/><path d="M76 40l4 7h-8z"/><circle cx="112" cy="44" r="3"/><path d="M144 40v8M140 44h8"/>
<path d="M4 84q3-5 6 0q0 4-3 4t-3-4z"/><path d="M36 86l6-3l2 6l-6 3z"/><path d="M74 88q4-6 8 0M74 92q4-6 8 0"/><ellipse cx="114" cy="88" rx="5" ry="2.500" transform="rotate(30 114 88)"/><path d="M142 84l4 4l-4 4l-4-4z"/>
<path d="M34 122l2 4l4 1l-3 3l1 4l-4-2l-4 2l1-4l-3-3l4-1z"/><circle cx="72" cy="122" r="2.500"/><path d="M106 120q4-5 8 0q-4 5-8 0z"/><path d="M142 118l5 2l-2 5l-5-2z"/>
<path d="M6 8l4 3l-3 4zM40 4v6M37 7h6"/><ellipse cx="78" cy="6" rx="4" ry="2" transform="rotate(-30 78 6)"/><path d="M110 2q3 4 0 8"/><circle cx="146" cy="8" r="2"/>
</g></pattern></defs></svg><div class="abs" style="left:525px;top:580px;width:270px;height:358px;background:#eceef4;border:1px solid #a7b0c4;border-top:none;border-radius:8px 8px 0 0"></div><svg class="abs" style="left:526px;top:628px;" width="251" height="261" viewBox="0 0 251 261"><rect width="251" height="261" fill="url(#dood)"/></svg><div class="abs" style="left:777px;top:628px;width:17px;height:261px;background:#f1f1f1"></div><svg class="abs" style="left:781.5px;top:634.5px;" width="8" height="4.5" viewBox="0 0 8 4.5"><path d="M0 4.500L4 0l4 4.500z" fill="#7d7d7d"/></svg><svg class="abs" style="left:781.5px;top:877px;" width="8" height="4.5" viewBox="0 0 8 4.5"><path d="M0 0h8L4 4.500z" fill="#7d7d7d"/></svg><div class="abs" style="left:779px;top:649px;width:13px;height:222px;background:#c1c1c1"></div><div class="abs" style="left:526px;top:579px;width:268px;height:49px;background:#004c8f;border-radius:8px 8px 0 0"></div><svg class="abs" style="left:537px;top:586px;" width="36" height="36" viewBox="0 0 36 36"><defs><clipPath id="cp0"><circle cx="18" cy="18" r="18"/></clipPath></defs><g clip-path="url(#cp0)"><g filter="url(#avb)">
<rect x="-6" y="-6" width="48" height="48" fill="#a6a6a6"/><rect x="25.800" y="-2" width="4.200" height="28" fill="#f6f6f6"/><rect x="30" y="0" width="1" height="26" fill="#8a8a8a"/><rect x="31" y="-2" width="8" height="28" fill="#e2e2e2"/>
<path d="M-3 31Q4 25 12 24L24 22Q31 23 39 30V42H-3Z" fill="#353535"/><path d="M4 28h3v2H4zM9 31h2v3H9zM25 26h3v2h-3zM28 30h2v3h-2zM22 31h2v2h-2zM7 33h3v2H7z" fill="#8a8a8a"/>
<ellipse cx="18.500" cy="14.500" rx="7.300" ry="10.500" fill="#8f8f93"/>
<ellipse cx="16" cy="15.900" rx="3.300" ry="2" fill="#fff"/><ellipse cx="24.200" cy="15.600" rx="2" ry="1.800" fill="#f4f4f4"/><ellipse cx="23" cy="9.500" rx="2" ry="1.600" fill="#d4d4d4"/></g>
<path d="M10.200 20.500L10 9Q11 1 18.500 .7Q26 1 26.300 9Q23 4.800 18 5.200Q13.500 5.500 12.800 12L12.600 20.500Z" fill="#1e1e1e" opacity=".92"/>
<rect x="13" y="11.900" width="12.300" height="1.600" fill="#2a2a2a" opacity=".7"/>
<path d="M11.500 17.500Q12 19.800 14 19.600Q18 18.300 22 19.600Q24.500 19.800 25.200 17.500Q25.700 24 22 26.200Q18 28.600 14.500 26.200Q11 23.500 11.500 17.500Z" fill="#1a1a1a" opacity=".93"/>
<ellipse cx="17.800" cy="22.700" rx="1.500" ry="1.900" fill="#d8d8d8"/>
<path d="M14 27.400L18 29.800L22 27.400V30H14Z" fill="#bdbdbd"/></g></svg><span class="t" style="left:581.30px;top:590.33px;font-size:16.5px;line-height:16.5px;color:#fff;font-weight:700;letter-spacing:-0.957px;">Raman Nitin</span><span class="t" style="left:581.30px;top:606.84px;font-size:12px;line-height:12px;color:#fff;letter-spacing:-0.575px;">Sales Execut...</span><svg class="abs" style="left:686px;top:594.6px;" width="20.3" height="13.6" viewBox="0 0 20.300 13.600"><rect x="0" y="0.300" width="15" height="13" rx="2.800" fill="#fff"/><path d="M14.500 4.500l5.500-3.200v10.500l-5.500-3.200z" fill="#fff"/></svg><svg class="abs" style="left:716px;top:593.8px;" width="15.5" height="15.5" viewBox="0 0 17 16"><path d="M3.200.200c.5-.3 1.100-.2 1.400.3l1.900 2.800c.3.500.2 1.100-.2 1.400L5 5.700c1.300 2.900 3.300 4.900 6 6.100l1-1.400c.3-.4.900-.6 1.400-.3l2.900 1.800c.5.300.6.900.3 1.400l-1.200 1.700c-.8 1.100-2.300 1.300-3.600.7C6.800 13.500 3.200 9.500 1.100 4.600c-.5-1.200-.3-2.600.7-3.400z" fill="#fff"/></svg><svg class="abs" style="left:737px;top:594.7px;" width="13" height="13" viewBox="-0.400 -0.100 13.800 13.800"><path d="M5.400 0h2.200l.3 1.700l1.200.5l1.400-1l1.600 1.600l-1 1.400l.5 1.200l1.700.3v2.200l-1.700.3l-.5 1.200l1 1.400l-1.600 1.600l-1.400-1l-1.200.5l-.3 1.700H5.400l-.3-1.700l-1.200-.5l-1.400 1L.9 10.800l1-1.400l-.5-1.200L-.3 7.900V5.700l1.700-.3l.5-1.200l-1-1.400L2.500 1.200l1.400 1l1.200-.5zM6.500 4.600a1.900 1.900 0 1 0 0 3.800a1.900 1.900 0 0 0 0-3.800z" fill="#fff" fill-rule="evenodd"/></svg><svg class="abs" style="left:754.8px;top:592px;" width="19" height="20" viewBox="0 0 19 20"><ellipse cx="9.500" cy="11" rx="8.500" ry="8.300" fill="#0a3f78" opacity=".5"/><circle cx="9.500" cy="9.800" r="8.300" fill="#fff"/><path d="M6.800 7.100l5.400 5.400M12.200 7.100l-5.400 5.400" stroke="#3f74ad" stroke-width="1.100"/></svg><div class="abs" style="left:539px;top:640.3px;width:175px;height:31.5px;background:#7fa3c8;border-radius:9px"></div><span class="t" style="left:544.00px;top:648.83px;font-size:15.8px;line-height:15.8px;color:#fff;letter-spacing:-0.790px;">Hello, I would like to apply!</span><span class="t" style="left:548.90px;top:675.27px;font-size:10.2px;line-height:10.2px;color:#1a1a1a;letter-spacing:-0.398px;">7:42 AM</span><div class="abs" style="left:539px;top:689px;width:189px;height:31.5px;background:#7fa3c8;border-radius:9px"></div><span class="t" style="left:544.00px;top:697.53px;font-size:15.8px;line-height:15.8px;color:#fff;letter-spacing:-0.736px;">I’m interested in the position.</span><span class="t" style="left:548.90px;top:723.97px;font-size:10.2px;line-height:10.2px;color:#1a1a1a;letter-spacing:-0.398px;">7:42 AM</span><div class="abs" style="left:539px;top:738px;width:84px;height:31.5px;background:#7fa3c8;border-radius:9px"></div><span class="t" style="left:544.00px;top:746.53px;font-size:15.8px;line-height:15.8px;color:#fff;letter-spacing:-1.337px;">Can I apply?</span><span class="t" style="left:548.90px;top:772.97px;font-size:10.2px;line-height:10.2px;color:#1a1a1a;letter-spacing:-0.398px;">7:42 AM</span><div class="abs" style="left:561px;top:799.8px;width:181px;height:29px;background:#7fa3c8;border-radius:9px"></div><svg class="abs" style="left:568px;top:808.0px;" width="15" height="14.5" viewBox="0 -0.600 15 15"><path d="M3.500 1.300v4.200h4.200M3.800 5.200L8 1l2 2l4.200-3.600" fill="none" stroke="#f0564a" stroke-width="1.300"/><path d="M0 12.800c0-1.800 3.300-4 7.500-4s7.500 2.200 7.500 4v.9c0 .4-.3.700-.7.700h-2.800c-.4 0-.7-.3-.7-.7v-1.500c-1-.5-2.200-.7-3.300-.7s-2.300.2-3.300.7v1.500c0 .4-.3.700-.7.700H.7c-.4 0-.7-.3-.7-.7z" fill="#f0564a"/></svg><span class="t" style="left:592.60px;top:809.63px;font-size:11.3px;line-height:11.3px;color:#fff;letter-spacing:-0.183px;">Missed Audio Call at 7:42 AM</span><div class="abs" style="left:561px;top:859px;width:181px;height:29px;background:#7fa3c8;border-radius:9px"></div><svg class="abs" style="left:568px;top:867.2px;" width="15" height="14.5" viewBox="0 -0.600 15 15"><path d="M3.500 1.300v4.200h4.200M3.800 5.200L8 1l2 2l4.200-3.600" fill="none" stroke="#f0564a" stroke-width="1.300"/><path d="M0 12.800c0-1.800 3.300-4 7.500-4s7.500 2.200 7.500 4v.9c0 .4-.3.700-.7.700h-2.800c-.4 0-.7-.3-.7-.7v-1.500c-1-.5-2.200-.7-3.300-.7s-2.300.2-3.300.7v1.500c0 .4-.3.700-.7.700H.7c-.4 0-.7-.3-.7-.7z" fill="#f0564a"/></svg><span class="t" style="left:592.60px;top:868.83px;font-size:11.3px;line-height:11.3px;color:#fff;letter-spacing:-0.183px;">Missed Audio Call at 7:43 AM</span><div class="abs" style="left:538.5px;top:895.5px;width:198px;height:35px;background:#fff;border:1px solid #dcdfe6;border-radius:14px"></div><span class="t" style="left:551.50px;top:907.13px;font-size:11.3px;line-height:11.3px;color:#555;letter-spacing:-0.207px;">Type a message</span><svg class="abs" style="left:707px;top:908px;" width="15.5" height="13" viewBox="0 0 15.5 13"><path d="M0 0l15.500 6.500L0 13l.3-5l7.700-1.500L.3 5z" fill="#004c8f"/></svg><svg class="abs" style="left:751.7px;top:898px;" width="13" height="26" viewBox="0 0 13 26"><rect x="2.600" y="0" width="7.800" height="17.500" rx="3.900" fill="#0b4f94"/><path d="M.7 10.500v2.500c0 3.300 2.600 5.800 5.800 5.800s5.800-2.500 5.800-5.800v-2.500" fill="none" stroke="#0b4f94" stroke-width="1.100"/><path d="M6.500 19v6.500" stroke="#0b4f94" stroke-width="1.100"/></svg><div class="abs" style="left:805px;top:580px;width:270px;height:358px;background:#eceef4;border:1px solid #a7b0c4;border-top:none;border-radius:8px 8px 0 0"></div><svg class="abs" style="left:806px;top:628px;" width="251" height="261" viewBox="0 0 251 261"><rect width="251" height="261" fill="url(#dood)"/></svg><div class="abs" style="left:1057px;top:628px;width:17px;height:261px;background:#f1f1f1"></div><svg class="abs" style="left:1061.5px;top:634.5px;" width="8" height="4.5" viewBox="0 0 8 4.5"><path d="M0 4.500L4 0l4 4.500z" fill="#7d7d7d"/></svg><svg class="abs" style="left:1061.5px;top:877px;" width="8" height="4.5" viewBox="0 0 8 4.5"><path d="M0 0h8L4 4.500z" fill="#7d7d7d"/></svg><div class="abs" style="left:806px;top:579px;width:268px;height:49px;background:#004c8f;border-radius:8px 8px 0 0"></div><svg class="abs" style="left:817px;top:586px;" width="36" height="36" viewBox="0 0 36 36"><circle cx="18" cy="18" r="17" fill="#004c8f" stroke="#8fb0d3" stroke-width="1.300"/><text x="18" y="24.600" text-anchor="middle" font-family="Liberation Sans, sans-serif" font-weight="700" font-size="18.500" fill="#fff">S</text></svg><span class="t" style="left:861.30px;top:590.33px;font-size:16.5px;line-height:16.5px;color:#fff;font-weight:700;letter-spacing:-0.959px;">Sai Dilee...</span><span class="t" style="left:861.30px;top:606.84px;font-size:12px;line-height:12px;color:#fff;letter-spacing:-0.575px;">Sales Execut...</span><svg class="abs" style="left:966px;top:594.6px;" width="20.3" height="13.6" viewBox="0 0 20.300 13.600"><rect x="0" y="0.300" width="15" height="13" rx="2.800" fill="#fff"/><path d="M14.500 4.500l5.500-3.200v10.500l-5.500-3.200z" fill="#fff"/></svg><svg class="abs" style="left:996px;top:593.8px;" width="15.5" height="15.5" viewBox="0 0 17 16"><path d="M3.200.200c.5-.3 1.100-.2 1.400.3l1.900 2.800c.3.500.2 1.100-.2 1.400L5 5.700c1.300 2.900 3.300 4.900 6 6.100l1-1.400c.3-.4.900-.6 1.400-.3l2.900 1.800c.5.300.6.900.3 1.400l-1.200 1.700c-.8 1.100-2.300 1.300-3.600.7C6.800 13.500 3.200 9.500 1.100 4.600c-.5-1.200-.3-2.600.7-3.400z" fill="#fff"/></svg><svg class="abs" style="left:1017px;top:594.7px;" width="13" height="13" viewBox="-0.400 -0.100 13.800 13.800"><path d="M5.400 0h2.200l.3 1.700l1.200.5l1.400-1l1.600 1.600l-1 1.400l.5 1.200l1.700.3v2.200l-1.700.3l-.5 1.200l1 1.400l-1.600 1.600l-1.400-1l-1.200.5l-.3 1.700H5.400l-.3-1.700l-1.200-.5l-1.400 1L.9 10.800l1-1.400l-.5-1.200L-.3 7.900V5.700l1.700-.3l.5-1.200l-1-1.400L2.500 1.200l1.400 1l1.200-.5zM6.500 4.600a1.900 1.900 0 1 0 0 3.800a1.900 1.900 0 0 0 0-3.800z" fill="#fff" fill-rule="evenodd"/></svg><svg class="abs" style="left:1034.8px;top:592px;" width="19" height="20" viewBox="0 0 19 20"><ellipse cx="9.500" cy="11" rx="8.500" ry="8.300" fill="#0a3f78" opacity=".5"/><circle cx="9.500" cy="9.800" r="8.300" fill="#fff"/><path d="M6.800 7.100l5.400 5.400M12.200 7.100l-5.400 5.400" stroke="#3f74ad" stroke-width="1.100"/></svg><div class="abs" style="left:819px;top:645.2px;width:189px;height:31.5px;background:#7fa3c8;border-radius:9px"></div><span class="t" style="left:824.00px;top:653.73px;font-size:15.8px;line-height:15.8px;color:#fff;letter-spacing:-0.736px;">I’m interested in the position.</span><span class="t" style="left:828.90px;top:680.17px;font-size:10.2px;line-height:10.2px;color:#1a1a1a;letter-spacing:-0.328px;">11:01 AM</span><div class="abs" style="left:819px;top:694.2px;width:84px;height:31.5px;background:#7fa3c8;border-radius:9px"></div><span class="t" style="left:824.00px;top:702.73px;font-size:15.8px;line-height:15.8px;color:#fff;letter-spacing:-1.337px;">Can I apply?</span><span class="t" style="left:828.90px;top:729.17px;font-size:10.2px;line-height:10.2px;color:#1a1a1a;letter-spacing:-0.328px;">11:01 AM</span><div class="abs" style="left:818.5px;top:895.5px;width:198px;height:35px;background:#fff;border:1px solid #dcdfe6;border-radius:14px"></div><span class="t" style="left:831.50px;top:907.13px;font-size:11.3px;line-height:11.3px;color:#555;letter-spacing:-0.207px;">Type a message</span><svg class="abs" style="left:987px;top:908px;" width="15.5" height="13" viewBox="0 0 15.5 13"><path d="M0 0l15.500 6.500L0 13l.3-5l7.700-1.500L.3 5z" fill="#004c8f"/></svg><svg class="abs" style="left:1031.7px;top:898px;" width="13" height="26" viewBox="0 0 13 26"><rect x="2.600" y="0" width="7.800" height="17.500" rx="3.900" fill="#0b4f94"/><path d="M.7 10.500v2.500c0 3.300 2.600 5.800 5.800 5.800s5.800-2.500 5.800-5.800v-2.500" fill="none" stroke="#0b4f94" stroke-width="1.100"/><path d="M6.500 19v6.500" stroke="#0b4f94" stroke-width="1.100"/></svg><div class="abs" style="left:1085px;top:580px;width:270px;height:358px;background:#eceef4;border:1px solid #a7b0c4;border-top:none;border-radius:8px 8px 0 0"></div><svg class="abs" style="left:1086px;top:628px;" width="251" height="261" viewBox="0 0 251 261"><rect width="251" height="261" fill="url(#dood)"/></svg><div class="abs" style="left:1337px;top:628px;width:17px;height:261px;background:#f1f1f1"></div><svg class="abs" style="left:1341.5px;top:634.5px;" width="8" height="4.5" viewBox="0 0 8 4.5"><path d="M0 4.500L4 0l4 4.500z" fill="#7d7d7d"/></svg><svg class="abs" style="left:1341.5px;top:877px;" width="8" height="4.5" viewBox="0 0 8 4.5"><path d="M0 0h8L4 4.500z" fill="#7d7d7d"/></svg><div class="abs" style="left:1086px;top:579px;width:268px;height:49px;background:#004c8f;border-radius:8px 8px 0 0"></div><svg class="abs" style="left:1097px;top:586px;" width="36" height="36" viewBox="0 0 36 36"><defs><clipPath id="cp2"><circle cx="18" cy="18" r="18"/></clipPath></defs><g clip-path="url(#cp2)"><g filter="url(#avb)">
<rect x="-6" y="-6" width="48" height="48" fill="#eef0f3"/><rect y="22" width="36" height="14" fill="#dcdcd4"/>
<ellipse cx="20" cy="6" rx="3" ry="2.500" fill="#b9bccb"/>
<path d="M0 11l14 3v7L0 17z" fill="#e9a04a"/><rect x="22" y="13" width="14" height="2.500" fill="#e9a860"/>
<rect x="10" y="13.500" width="4" height="1.500" fill="#e0443a"/><rect x="18" y="11" width="3.500" height="6" fill="#f4f6fb"/><circle cx="18.500" cy="10.500" r="1.200" fill="#2f3f8a"/>
<path d="M10 20l16-2l10 8v2l-12-5l-12 1z" fill="#14448a"/><rect x="14" y="18" width="7.500" height="8" rx="2" fill="#1a3f8c"/><rect x="19" y="20" width="3" height="5" fill="#4a4a4a"/>
<rect x="6" y="18.500" width="3" height="3" fill="#2a2a6a"/><rect x="11" y="29" width="12" height="4" rx="1.500" fill="#14448a"/></g></g></svg><span class="t" style="left:1141.30px;top:590.33px;font-size:16.5px;line-height:16.5px;color:#fff;font-weight:700;letter-spacing:-0.766px;">Awais Mirza</span><span class="t" style="left:1141.30px;top:606.84px;font-size:12px;line-height:12px;color:#fff;letter-spacing:-0.575px;">Sales Execut...</span><svg class="abs" style="left:1246px;top:594.6px;" width="20.3" height="13.6" viewBox="0 0 20.300 13.600"><rect x="0" y="0.300" width="15" height="13" rx="2.800" fill="#fff"/><path d="M14.500 4.500l5.500-3.200v10.500l-5.500-3.200z" fill="#fff"/></svg><svg class="abs" style="left:1276px;top:593.8px;" width="15.5" height="15.5" viewBox="0 0 17 16"><path d="M3.200.200c.5-.3 1.100-.2 1.400.3l1.900 2.800c.3.500.2 1.100-.2 1.400L5 5.700c1.300 2.900 3.300 4.900 6 6.100l1-1.400c.3-.4.900-.6 1.400-.3l2.900 1.800c.5.300.6.900.3 1.400l-1.200 1.700c-.8 1.100-2.300 1.300-3.600.7C6.800 13.500 3.200 9.500 1.100 4.600c-.5-1.200-.3-2.600.7-3.400z" fill="#fff"/></svg><svg class="abs" style="left:1297px;top:594.7px;" width="13" height="13" viewBox="-0.400 -0.100 13.800 13.800"><path d="M5.400 0h2.200l.3 1.700l1.200.5l1.400-1l1.600 1.600l-1 1.400l.5 1.200l1.700.3v2.200l-1.700.3l-.5 1.200l1 1.400l-1.600 1.600l-1.400-1l-1.200.5l-.3 1.700H5.400l-.3-1.700l-1.200-.5l-1.400 1L.9 10.800l1-1.400l-.5-1.200L-.3 7.900V5.700l1.700-.3l.5-1.200l-1-1.400L2.500 1.200l1.400 1l1.200-.5zM6.500 4.600a1.900 1.900 0 1 0 0 3.800a1.900 1.900 0 0 0 0-3.800z" fill="#fff" fill-rule="evenodd"/></svg><svg class="abs" style="left:1314.8px;top:592px;" width="19" height="20" viewBox="0 0 19 20"><ellipse cx="9.500" cy="11" rx="8.500" ry="8.300" fill="#0a3f78" opacity=".5"/><circle cx="9.500" cy="9.800" r="8.300" fill="#fff"/><path d="M6.800 7.100l5.400 5.400M12.200 7.100l-5.400 5.400" stroke="#3f74ad" stroke-width="1.100"/></svg><div class="abs" style="left:1099px;top:645.2px;width:175px;height:31.5px;background:#7fa3c8;border-radius:9px"></div><span class="t" style="left:1104.00px;top:653.73px;font-size:15.8px;line-height:15.8px;color:#fff;letter-spacing:-0.790px;">Hello, I would like to apply!</span><span class="t" style="left:1108.90px;top:680.17px;font-size:10.2px;line-height:10.2px;color:#1a1a1a;letter-spacing:-0.516px;">12:30 PM</span><div class="abs" style="left:1098.5px;top:895.5px;width:198px;height:35px;background:#fff;border:1px solid #dcdfe6;border-radius:14px"></div><span class="t" style="left:1111.50px;top:907.13px;font-size:11.3px;line-height:11.3px;color:#555;letter-spacing:-0.207px;">Type a message</span><svg class="abs" style="left:1267px;top:908px;" width="15.5" height="13" viewBox="0 0 15.5 13"><path d="M0 0l15.500 6.500L0 13l.3-5l7.700-1.500L.3 5z" fill="#004c8f"/></svg><svg class="abs" style="left:1311.7px;top:898px;" width="13" height="26" viewBox="0 0 13 26"><rect x="2.600" y="0" width="7.800" height="17.500" rx="3.900" fill="#0b4f94"/><path d="M.7 10.500v2.500c0 3.300 2.600 5.800 5.800 5.800s5.800-2.500 5.800-5.800v-2.500" fill="none" stroke="#0b4f94" stroke-width="1.100"/><path d="M6.500 19v6.500" stroke="#0b4f94" stroke-width="1.100"/></svg><div class="abs" style="left:1365px;top:580px;width:270px;height:358px;background:#eceef4;border:1px solid #a7b0c4;border-top:none;border-radius:8px 8px 0 0"></div><svg class="abs" style="left:1366px;top:628px;" width="251" height="261" viewBox="0 0 251 261"><rect width="251" height="261" fill="url(#dood)"/></svg><div class="abs" style="left:1617px;top:628px;width:17px;height:261px;background:#f1f1f1"></div><svg class="abs" style="left:1621.5px;top:634.5px;" width="8" height="4.5" viewBox="0 0 8 4.5"><path d="M0 4.500L4 0l4 4.500z" fill="#7d7d7d"/></svg><svg class="abs" style="left:1621.5px;top:877px;" width="8" height="4.5" viewBox="0 0 8 4.5"><path d="M0 0h8L4 4.500z" fill="#7d7d7d"/></svg><div class="abs" style="left:1366px;top:579px;width:268px;height:49px;background:#004c8f;border-radius:8px 8px 0 0"></div><svg class="abs" style="left:1377px;top:586px;" width="36" height="36" viewBox="0 0 36 36"><defs><clipPath id="cp3"><circle cx="18" cy="18" r="18"/></clipPath></defs><g clip-path="url(#cp3)"><g filter="url(#avb)">
<rect x="-6" y="-6" width="48" height="48" fill="#6f7468"/><rect x="0" y="0" width="36" height="12" fill="#3a3d3a"/>
<rect x="6" y="2" width="2" height="14" fill="#cfcfd6"/><rect x="10" y="0" width="1.500" height="12" fill="#bdbdc6"/><rect x="23.500" y="1" width="2" height="13" fill="#c9c9d0"/>
<path d="M0 18l8-2v20H0z" fill="#e0a968"/><rect x="0" y="13" width="4" height="5" fill="#f0f0f0"/>
<circle cx="27" cy="14" r="2" fill="#8fb070"/><circle cx="33" cy="17" r="2.500" fill="#8fb070"/><rect x="30" y="12" width="5" height="3" fill="#d9b9a0"/><circle cx="33" cy="23" r="2" fill="#8aa868"/>
<path d="M8 10q4-5 12-3l2 7l-1 8l4 4l2 10H9z" fill="#1f2123"/>
<path d="M14 14l4-2l1 3l-3 2z" fill="#d98a40"/><path d="M12 4l3 1l-1 3l-2-1z" fill="#cf3a3a"/>
<path d="M19 16l6 2l4 6l-2 1l-4-5l-4-1z" fill="#d81b60"/><path d="M21 17l4 1l-1 1.500l-3.500-1z" fill="#f0a030"/>
<path d="M18 20l3 8l-2 1l-2-7z" fill="#d9d9e0"/><path d="M22 24l8-2l3 8l-6 6h-5z" fill="#26282b"/><path d="M26 21l4 6" stroke="#c9ccd4" stroke-width="1.500"/>
<path d="M14 33l4-1l2 4h-6z" fill="#d81b60"/></g></g></svg><span class="t" style="left:1421.30px;top:590.33px;font-size:16.5px;line-height:16.5px;color:#fff;font-weight:700;letter-spacing:-1.071px;">Anves Veera...</span><span class="t" style="left:1421.30px;top:606.84px;font-size:12px;line-height:12px;color:#fff;letter-spacing:-0.575px;">Sales Execut...</span><svg class="abs" style="left:1526px;top:594.6px;" width="20.3" height="13.6" viewBox="0 0 20.300 13.600"><rect x="0" y="0.300" width="15" height="13" rx="2.800" fill="#fff"/><path d="M14.500 4.500l5.500-3.200v10.500l-5.500-3.200z" fill="#fff"/></svg><svg class="abs" style="left:1556px;top:593.8px;" width="15.5" height="15.5" viewBox="0 0 17 16"><path d="M3.200.200c.5-.3 1.100-.2 1.400.3l1.900 2.800c.3.500.2 1.100-.2 1.400L5 5.700c1.300 2.900 3.300 4.900 6 6.100l1-1.400c.3-.4.900-.6 1.400-.3l2.900 1.800c.5.300.6.900.3 1.400l-1.200 1.700c-.8 1.100-2.300 1.300-3.600.7C6.800 13.500 3.200 9.500 1.100 4.600c-.5-1.200-.3-2.600.7-3.400z" fill="#fff"/></svg><svg class="abs" style="left:1577px;top:594.7px;" width="13" height="13" viewBox="-0.400 -0.100 13.800 13.800"><path d="M5.400 0h2.200l.3 1.700l1.200.5l1.400-1l1.600 1.600l-1 1.400l.5 1.200l1.700.3v2.200l-1.700.3l-.5 1.200l1 1.400l-1.600 1.600l-1.400-1l-1.200.5l-.3 1.700H5.400l-.3-1.700l-1.200-.5l-1.400 1L.9 10.800l1-1.400l-.5-1.200L-.3 7.900V5.700l1.700-.3l.5-1.200l-1-1.400L2.500 1.200l1.400 1l1.200-.5zM6.500 4.600a1.900 1.900 0 1 0 0 3.800a1.900 1.900 0 0 0 0-3.800z" fill="#fff" fill-rule="evenodd"/></svg><svg class="abs" style="left:1594.8px;top:592px;" width="19" height="20" viewBox="0 0 19 20"><ellipse cx="9.500" cy="11" rx="8.500" ry="8.300" fill="#0a3f78" opacity=".5"/><circle cx="9.500" cy="9.800" r="8.300" fill="#fff"/><path d="M6.800 7.100l5.400 5.400M12.200 7.100l-5.400 5.400" stroke="#3f74ad" stroke-width="1.100"/></svg><div class="abs" style="left:1379px;top:645.2px;width:175px;height:31.5px;background:#7fa3c8;border-radius:9px"></div><span class="t" style="left:1384.00px;top:653.73px;font-size:15.8px;line-height:15.8px;color:#fff;letter-spacing:-0.790px;">Hello, I would like to apply!</span><span class="t" style="left:1388.90px;top:680.17px;font-size:10.2px;line-height:10.2px;color:#1a1a1a;letter-spacing:-0.576px;">2:15 PM</span><div class="abs" style="left:1378.5px;top:895.5px;width:198px;height:35px;background:#fff;border:1px solid #dcdfe6;border-radius:14px"></div><span class="t" style="left:1391.50px;top:907.13px;font-size:11.3px;line-height:11.3px;color:#555;letter-spacing:-0.207px;">Type a message</span><svg class="abs" style="left:1547px;top:908px;" width="15.5" height="13" viewBox="0 0 15.5 13"><path d="M0 0l15.500 6.500L0 13l.3-5l7.700-1.500L.3 5z" fill="#004c8f"/></svg><svg class="abs" style="left:1591.7px;top:898px;" width="13" height="26" viewBox="0 0 13 26"><rect x="2.600" y="0" width="7.800" height="17.500" rx="3.900" fill="#0b4f94"/><path d="M.7 10.500v2.500c0 3.300 2.600 5.800 5.800 5.800s5.800-2.500 5.800-5.800v-2.500" fill="none" stroke="#0b4f94" stroke-width="1.100"/><path d="M6.500 19v6.500" stroke="#0b4f94" stroke-width="1.100"/></svg><span class="t" style="left:688.50px;top:814.92px;font-size:49.5px;line-height:49.5px;color:#6a6a6e;font-weight:700;font-family:'DejaVu Sans','Liberation Sans',sans-serif;letter-spacing:-0.817px;z-index:50;-webkit-text-stroke:1.300px #6a6a6e;opacity:.215;">SoftwareSuggest</span><span class="t" style="left:1160.50px;top:831.84px;font-size:29.5px;line-height:29.5px;color:#6a6a6e;font-weight:700;font-family:'DejaVu Sans','Liberation Sans',sans-serif;letter-spacing:-2.901px;z-index:50;-webkit-text-stroke:.6px #6a6a6e;opacity:.215;">.com</span><div class="abs" style="left:1888px;top:607px;width:17px;height:322px;background:#f1f1f1"></div><svg class="abs" style="left:1892.5px;top:613.5px;" width="8" height="4.5" viewBox="0 0 8 4.5"><path d="M0 4.500L4 0l4 4.500z" fill="#a3a3a3"/></svg><svg class="abs" style="left:1892.5px;top:918.5px;" width="8" height="4.5" viewBox="0 0 8 4.5"><path d="M0 0h8L4 4.500z" fill="#505050"/></svg><div class="abs" style="left:1890px;top:624px;width:13px;height:17px;background:#c1c1c1"></div><div class="abs" style="left:1643px;top:532px;width:249px;height:405.5px;background:#fff;border:2px solid #eff0f4;border-radius:10px 10px 2px 2px"></div><div class="abs" style="left:1645px;top:535px;width:244px;height:62px;background:#34608a;border-radius:9px 9px 3px 3px"></div><svg class="abs" style="left:1665px;top:551px;" width="30" height="30" viewBox="0 0 30 30"><defs><clipPath id="c2"><circle cx="15" cy="15" r="15"/></clipPath></defs>
<g clip-path="url(#c2)"><rect width="30" height="30" fill="#3f7fbe"/><path d="M-2 10L22 32H-2z" fill="#b8466e"/><path d="M-2 10L11 22L5 32H-2z" fill="#de3c7c"/><circle cx="15" cy="15" r="14.300" fill="none" stroke="#7aa6d4" stroke-width="1.200" opacity=".6"/></g>
<text x="7.500" y="16" font-family="Liberation Sans, sans-serif" font-weight="700" font-size="11" fill="#eef3fa" textLength="15" lengthAdjust="spacingAndGlyphs">EZ</text>
<text x="8.300" y="23.300" font-family="Liberation Sans, sans-serif" font-weight="700" font-size="6.500" fill="#eef3fa" textLength="13.500" lengthAdjust="spacingAndGlyphs">Jobs</text></svg><span class="t" style="left:1703.60px;top:556.82px;font-size:21px;line-height:21px;color:#fff;letter-spacing:-0.465px;">Chats</span><svg class="abs" style="left:1855.5px;top:558.2px;" width="13.5" height="11" viewBox="0 0 13.5 11"><path d="M0 0h13.500L6.750 11z" fill="#fff"/></svg><div class="abs" style="left:1655px;top:607px;width:212px;height:44px;background:#f5f7fb"></div><svg class="abs" style="left:1670.8px;top:623px;" width="14.5" height="14" viewBox="0 0 15.500 15"><circle cx="6.2" cy="6" r="4.700" fill="none" stroke="#222" stroke-width="2.200"/><path d="M9.600 9.500l4.300 4.100" stroke="#222" stroke-width="2.400" stroke-linecap="round"/></svg><span class="t" style="left:1693.40px;top:622.30px;font-size:15px;line-height:15px;color:#666;letter-spacing:-0.906px;">Search</span><svg class="abs" style="left:1659px;top:655px;" width="30" height="30" viewBox="0 0 36 36"><defs><clipPath id="lp0"><circle cx="18" cy="18" r="18"/></clipPath></defs><g clip-path="url(#lp0)"><g filter="url(#avb)">
<rect x="-6" y="-6" width="48" height="48" fill="#6f7468"/><rect x="0" y="0" width="36" height="12" fill="#3a3d3a"/>
<rect x="6" y="2" width="2" height="14" fill="#cfcfd6"/><rect x="10" y="0" width="1.500" height="12" fill="#bdbdc6"/><rect x="23.500" y="1" width="2" height="13" fill="#c9c9d0"/>
<path d="M0 18l8-2v20H0z" fill="#e0a968"/><rect x="0" y="13" width="4" height="5" fill="#f0f0f0"/>
<circle cx="27" cy="14" r="2" fill="#8fb070"/><circle cx="33" cy="17" r="2.500" fill="#8fb070"/><rect x="30" y="12" width="5" height="3" fill="#d9b9a0"/><circle cx="33" cy="23" r="2" fill="#8aa868"/>
<path d="M8 10q4-5 12-3l2 7l-1 8l4 4l2 10H9z" fill="#1f2123"/>
<path d="M14 14l4-2l1 3l-3 2z" fill="#d98a40"/><path d="M12 4l3 1l-1 3l-2-1z" fill="#cf3a3a"/>
<path d="M19 16l6 2l4 6l-2 1l-4-5l-4-1z" fill="#d81b60"/><path d="M21 17l4 1l-1 1.500l-3.500-1z" fill="#f0a030"/>
<path d="M18 20l3 8l-2 1l-2-7z" fill="#d9d9e0"/><path d="M22 24l8-2l3 8l-6 6h-5z" fill="#26282b"/><path d="M26 21l4 6" stroke="#c9ccd4" stroke-width="1.500"/>
<path d="M14 33l4-1l2 4h-6z" fill="#d81b60"/></g></g></svg><span class="t" style="left:1695.30px;top:662.35px;font-size:14px;line-height:14px;color:#2b2b2b;letter-spacing:-0.223px;">Anvesh Veeragoni</span><svg class="abs" style="left:1659px;top:695px;" width="30" height="30" viewBox="0 0 36 36"><defs><clipPath id="lp1"><circle cx="18" cy="18" r="18"/></clipPath></defs><g clip-path="url(#lp1)"><g filter="url(#avb)">
<rect x="-6" y="-6" width="48" height="48" fill="#eef0f3"/><rect y="22" width="36" height="14" fill="#dcdcd4"/>
<ellipse cx="20" cy="6" rx="3" ry="2.500" fill="#b9bccb"/>
<path d="M0 11l14 3v7L0 17z" fill="#e9a04a"/><rect x="22" y="13" width="14" height="2.500" fill="#e9a860"/>
<rect x="10" y="13.500" width="4" height="1.500" fill="#e0443a"/><rect x="18" y="11" width="3.500" height="6" fill="#f4f6fb"/><circle cx="18.500" cy="10.500" r="1.200" fill="#2f3f8a"/>
<path d="M10 20l16-2l10 8v2l-12-5l-12 1z" fill="#14448a"/><rect x="14" y="18" width="7.500" height="8" rx="2" fill="#1a3f8c"/><rect x="19" y="20" width="3" height="5" fill="#4a4a4a"/>
<rect x="6" y="18.500" width="3" height="3" fill="#2a2a6a"/><rect x="11" y="29" width="12" height="4" rx="1.500" fill="#14448a"/></g></g></svg><span class="t" style="left:1695.30px;top:702.35px;font-size:14px;line-height:14px;color:#2b2b2b;letter-spacing:-0.240px;">Awais Mirza</span><svg class="abs" style="left:1659px;top:735px;" width="30" height="30" viewBox="0 0 36 36"><circle cx="18" cy="18" r="18" fill="#073b73"/><text x="18" y="24.800" text-anchor="middle" font-family="Liberation Sans, sans-serif" font-size="18.500" fill="#fff">S</text></svg><span class="t" style="left:1695.30px;top:742.35px;font-size:14px;line-height:14px;color:#2b2b2b;letter-spacing:-0.370px;">Sai Dileep</span><svg class="abs" style="left:1659px;top:775px;" width="30" height="30" viewBox="0 0 36 36"><defs><clipPath id="lp3"><circle cx="18" cy="18" r="18"/></clipPath></defs><g clip-path="url(#lp3)"><g filter="url(#avb)">
<rect x="-6" y="-6" width="48" height="48" fill="#a6a6a6"/><rect x="25.800" y="-2" width="4.200" height="28" fill="#f6f6f6"/><rect x="30" y="0" width="1" height="26" fill="#8a8a8a"/><rect x="31" y="-2" width="8" height="28" fill="#e2e2e2"/>
<path d="M-3 31Q4 25 12 24L24 22Q31 23 39 30V42H-3Z" fill="#353535"/><path d="M4 28h3v2H4zM9 31h2v3H9zM25 26h3v2h-3zM28 30h2v3h-2zM22 31h2v2h-2zM7 33h3v2H7z" fill="#8a8a8a"/>
<ellipse cx="18.500" cy="14.500" rx="7.300" ry="10.500" fill="#8f8f93"/>
<ellipse cx="16" cy="15.900" rx="3.300" ry="2" fill="#fff"/><ellipse cx="24.200" cy="15.600" rx="2" ry="1.800" fill="#f4f4f4"/><ellipse cx="23" cy="9.500" rx="2" ry="1.600" fill="#d4d4d4"/></g>
<path d="M10.200 20.500L10 9Q11 1 18.500 .7Q26 1 26.300 9Q23 4.800 18 5.200Q13.500 5.500 12.800 12L12.600 20.500Z" fill="#1e1e1e" opacity=".92"/>
<rect x="13" y="11.900" width="12.300" height="1.600" fill="#2a2a2a" opacity=".7"/>
<path d="M11.500 17.500Q12 19.800 14 19.600Q18 18.300 22 19.600Q24.500 19.800 25.200 17.500Q25.700 24 22 26.200Q18 28.600 14.500 26.200Q11 23.500 11.500 17.500Z" fill="#1a1a1a" opacity=".93"/>
<ellipse cx="17.800" cy="22.700" rx="1.500" ry="1.900" fill="#d8d8d8"/>
<path d="M14 27.400L18 29.800L22 27.400V30H14Z" fill="#bdbdbd"/></g></svg><span class="t" style="left:1695.30px;top:782.35px;font-size:14px;line-height:14px;color:#2b2b2b;letter-spacing:-0.103px;">Raman Nitin</span><svg class="abs" style="left:1659px;top:815px;" width="30" height="30" viewBox="0 0 36 36"><circle cx="18" cy="18" r="18" fill="#073b73"/><text x="18" y="24.800" text-anchor="middle" font-family="Liberation Sans, sans-serif" font-size="18.500" fill="#fff">R</text></svg><span class="t" style="left:1695.30px;top:822.35px;font-size:14px;line-height:14px;color:#2b2b2b;letter-spacing:-0.607px;">Ram Yadav</span><svg class="abs" style="left:1659px;top:855px;" width="30" height="30" viewBox="0 0 36 36"><circle cx="18" cy="18" r="18" fill="#073b73"/><text x="18" y="24.800" text-anchor="middle" font-family="Liberation Sans, sans-serif" font-size="18.500" fill="#fff">M</text></svg><span class="t" style="left:1695.30px;top:862.35px;font-size:14px;line-height:14px;color:#2b2b2b;letter-spacing:-0.010px;">Mekala Ananth</span><svg class="abs" style="left:1659px;top:895px;" width="30" height="30" viewBox="0 0 36 36"><defs><clipPath id="lp6"><circle cx="18" cy="18" r="18"/></clipPath></defs><g clip-path="url(#lp6)"><g filter="url(#avb)">
<rect x="-6" y="-6" width="48" height="48" fill="#dfa565"/><rect x="-4" y="-4" width="44" height="9" fill="#e9d6bd"/><rect x="24" y="8" width="14" height="16" fill="#eed9c0"/><rect x="-2" y="22" width="12" height="16" fill="#e8b884"/>
<path d="M3 8l12 3l2 5l-6 1z" fill="#4a35a0"/><path d="M21 13l11 1l-2 4l-9 1z" fill="#6b45b5"/>
<rect x="14.500" y="9.500" width="8" height="11.500" rx="1.500" fill="#f3f1f4"/><circle cx="18.500" cy="6.800" r="2.800" fill="#b07a5a"/><path d="M15.500 5.500q3-3.500 6 0z" fill="#2a2020"/>
<path d="M13.500 20h9l1.500 12h-4l-2-7l-2 7h-4z" fill="#2b2a2e"/><rect x="11" y="31" width="5" height="3" fill="#cf2f55"/><rect x="19" y="31.500" width="5" height="3" fill="#cf2f55"/></g></g></svg><span class="t" style="left:1695.30px;top:902.35px;font-size:14px;line-height:14px;color:#2b2b2b;letter-spacing:-0.153px;">Syed Iftequarali</span>
</div>
</body>
</html>
